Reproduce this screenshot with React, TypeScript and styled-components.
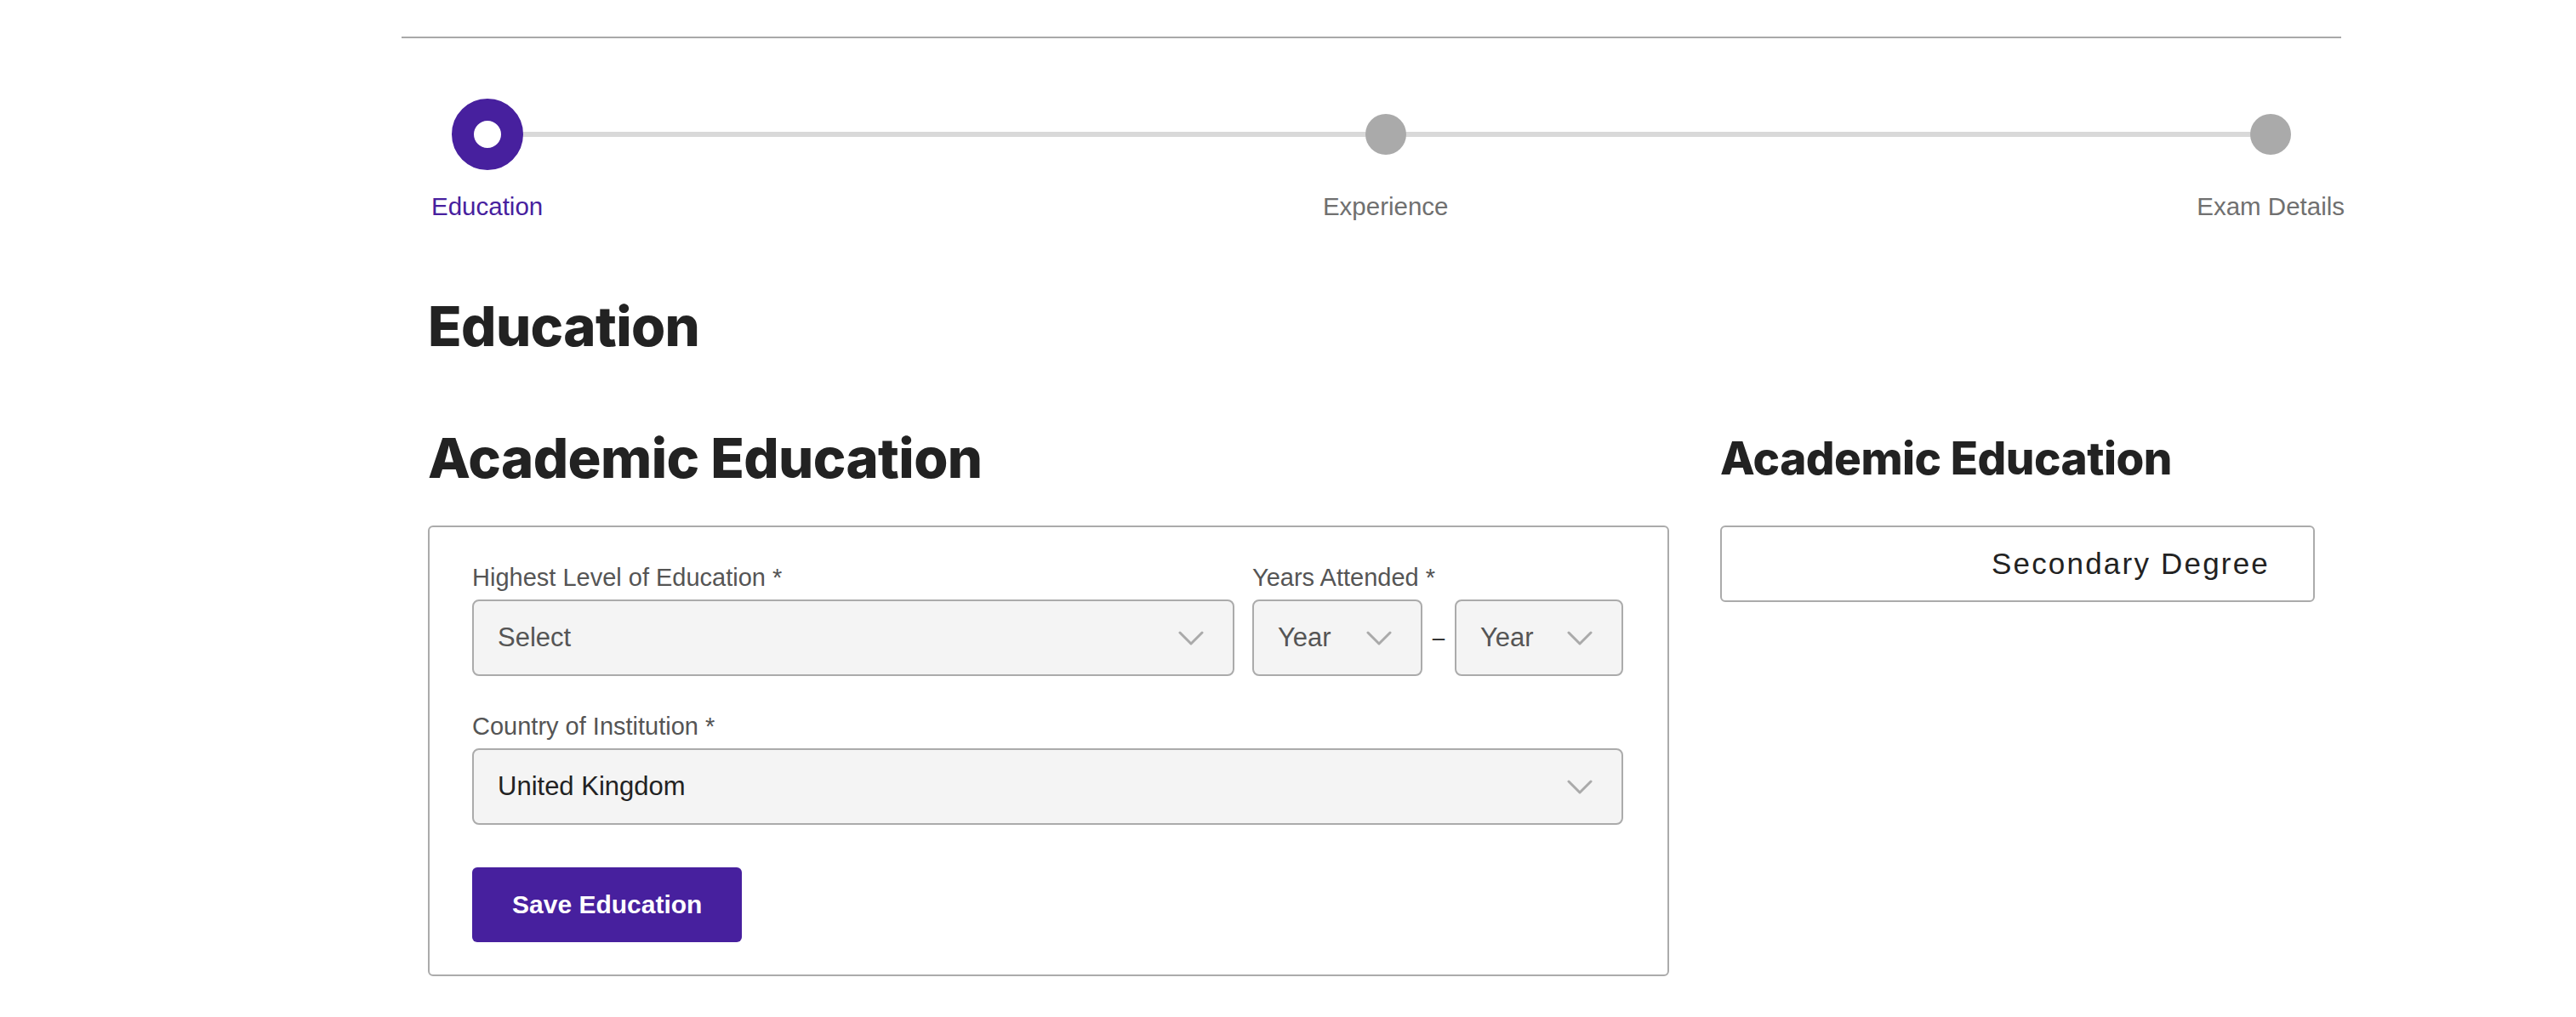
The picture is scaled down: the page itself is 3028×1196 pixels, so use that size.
import React from "react";
import styled, { createGlobalStyle } from "styled-components";

const PURPLE = "#47209e";
const BORDER = "#ababab";

const GlobalStyle = createGlobalStyle`
  body {
    margin: 0;
    background: #fff;
    font-family: "Liberation Sans", Arial, sans-serif;
  }
`;

const Page = styled.div`
  width: 2280px;
  margin-left: 472px;
  padding-top: 43px;
  padding-bottom: 40px;
`;

const Divider = styled.hr`
  margin: 0;
  border: 0;
  border-top: 2px solid #a9a9a9;
`;

const Stepper = styled.ol`
  list-style: none;
  margin: 71px -4px 0 35px;
  padding: 0;
  display: grid;
  grid-template-columns: auto 916fr auto 879fr auto;
  position: relative;

  &::before {
    content: "";
    position: absolute;
    top: 39px;
    left: 66px;
    right: 87px;
    height: 6px;
    background: #d9d9d9;
  }
`;

const Step = styled.li<{ $col: number }>`
  grid-column: ${(p) => p.$col};
  display: flex;
  flex-direction: column;
  align-items: center;
`;

const Dot = styled.span<{ $active: boolean }>`
  position: relative;
  z-index: 1;
  box-sizing: border-box;
  border-radius: 50%;
  width: ${(p) => (p.$active ? 84 : 48)}px;
  height: ${(p) => (p.$active ? 84 : 48)}px;
  margin: ${(p) => (p.$active ? 0 : 18)}px 0;
  background: ${(p) => (p.$active ? "#fff" : "#aaaaaa")};
  border: ${(p) => (p.$active ? `26px solid ${PURPLE}` : "none")};
`;

const StepLabel = styled.span<{ $active: boolean }>`
  margin-top: 26px;
  font-size: 29.5px;
  line-height: 34px;
  white-space: nowrap;
  color: ${(p) => (p.$active ? PURPLE : "#707070")};
`;

const PageTitle = styled.h1`
  margin: 85px 0 0 31px;
  font-family: Inter, "Liberation Sans", sans-serif;
  font-weight: 800;
  font-size: 65px;
  line-height: 78px;
  letter-spacing: -0.6px;
  color: #222;
`;

const Columns = styled.div`
  display: grid;
  grid-template-columns: 1fr 699px;
  column-gap: 60px;
  padding: 0 31px;
  margin-top: 77px;
  align-items: start;
`;

const SectionTitle = styled.h2<{ $size: number }>`
  margin: 0 0 40px;
  font-family: Inter, "Liberation Sans", sans-serif;
  font-weight: 800;
  font-size: ${(p) => p.$size}px;
  line-height: 78px;
  letter-spacing: ${(p) => (p.$size > 60 ? -0.6 : -0.5)}px;
  color: #222;
`;

const Card = styled.form`
  border: 2px solid ${BORDER};
  border-radius: 6px;
  padding: 42px 52px 38px 50px;
`;

const FieldRow = styled.div<{ $last?: boolean }>`
  display: flex;
  gap: 21px;
  margin: ${(p) => (p.$last ? "50px 0 0" : "0 0 42px")};
`;

const Field = styled.div<{ $grow?: boolean }>`
  display: flex;
  flex-direction: column;
  flex: ${(p) => (p.$grow ? "1 1 0" : "0 0 auto")};
`;

const Label = styled.label`
  font-size: 29px;
  line-height: 34px;
  color: #555;
  margin-bottom: 9px;
  white-space: nowrap;
`;

const SelectBox = styled.div<{ $width?: number; $filled?: boolean }>`
  box-sizing: border-box;
  height: 90px;
  width: ${(p) => (p.$width ? `${p.$width}px` : "auto")};
  display: flex;
  align-items: center;
  justify-content: space-between;
  padding: 0 34px 0 28px;
  background: #f4f4f4;
  border: 2px solid ${BORDER};
  border-radius: 8px;
  font-size: 31px;
  color: ${(p) => (p.$filled ? "#222" : "#555")};
`;

const YearsGroup = styled.div`
  display: flex;
  align-items: center;
`;

const Dash = styled.span`
  width: 38px;
  text-align: center;
  font-size: 26px;
  color: #222;
`;

const SaveButton = styled.button`
  height: 88px;
  padding: 0 47px;
  border: none;
  border-radius: 6px;
  background: ${PURPLE};
  color: #fff;
  font-family: "Liberation Sans", Arial, sans-serif;
  font-weight: 700;
  font-size: 30px;
`;

const SummaryBox = styled.div`
  box-sizing: border-box;
  height: 90px;
  display: flex;
  align-items: center;
  justify-content: flex-end;
  padding-right: 51px;
  border: 2px solid ${BORDER};
  border-radius: 6px;
  font-size: 35px;
  letter-spacing: 2.2px;
  color: #222;
`;

const Chevron = () => (
  <svg width="30" height="17" viewBox="0 0 30 17" fill="none">
    <polyline points="2,2 15,15 28,2" stroke="#aaaaaa" strokeWidth="3" strokeLinecap="round" strokeLinejoin="round" />
  </svg>
);

const Select = ({ value, width, filled }: { value: string; width?: number; filled?: boolean }) => (
  <SelectBox $width={width} $filled={filled}>
    <span>{value}</span>
    <Chevron />
  </SelectBox>
);

const steps = [
  { label: "Education", active: true },
  { label: "Experience", active: false },
  { label: "Exam Details", active: false },
];

export default function App() {
  return (
    <>
      <GlobalStyle />
      <Page>
        <Divider />
        <Stepper>
          {steps.map((s, i) => (
            <Step key={s.label} $col={i * 2 + 1}>
              <Dot $active={s.active} />
              <StepLabel $active={s.active}>{s.label}</StepLabel>
            </Step>
          ))}
        </Stepper>

        <PageTitle>Education</PageTitle>

        <Columns>
          <div>
            <SectionTitle $size={65}>Academic Education</SectionTitle>
            <Card onSubmit={(e) => e.preventDefault()}>
              <FieldRow>
                <Field $grow>
                  <Label>Highest Level of Education *</Label>
                  <Select value="Select" />
                </Field>
                <Field>
                  <Label>Years Attended *</Label>
                  <YearsGroup>
                    <Select value="Year" width={200} />
                    <Dash>–</Dash>
                    <Select value="Year" width={198} />
                  </YearsGroup>
                </Field>
              </FieldRow>
              <Field>
                <Label>Country of Institution *</Label>
                <Select value="United Kingdom" filled />
              </Field>
              <FieldRow $last>
                <SaveButton type="submit">Save Education</SaveButton>
              </FieldRow>
            </Card>
          </div>
          <div>
            <SectionTitle $size={53}>Academic Education</SectionTitle>
            <SummaryBox>Secondary Degree</SummaryBox>
          </div>
        </Columns>
      </Page>
    </>
  );
}
